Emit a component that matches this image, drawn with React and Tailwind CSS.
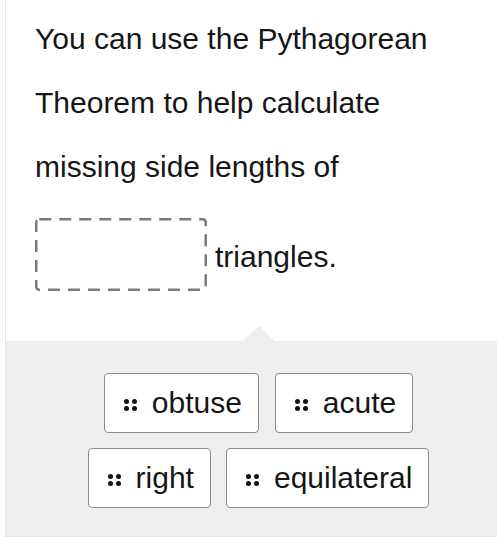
import React from "react";

function Dots() {
  return (
    <svg width="13" height="12" viewBox="0 0 13 12" className="shrink-0 mt-[3px]">
      <circle cx="2.5" cy="2.5" r="2.5" fill="#111" />
      <circle cx="10.5" cy="2.5" r="2.5" fill="#111" />
      <circle cx="2.5" cy="9.5" r="2.5" fill="#111" />
      <circle cx="10.5" cy="9.5" r="2.5" fill="#111" />
    </svg>
  );
}

function Chip({ label }) {
  return (
    <div className="h-[60px] flex items-center gap-[15px] pl-[19px] pr-[16px] bg-white border border-[#8c8c8c] rounded-[4px]">
      <Dots />
      <span className="text-[30px] leading-[34px] text-[#161616]">{label}</span>
    </div>
  );
}

export default function App() {
  return (
    <div
      className="w-[497px] h-[544px] overflow-hidden bg-white"
      style={{ fontFamily: '"Liberation Sans", Arial, Helvetica, sans-serif' }}
    >
      <div className="ml-[5px] w-[506px] h-[537px] flex flex-col border-l border-b border-[#e4e4e4]">
        <div className="pl-[29px] pt-[7px] pb-[50px] text-[30px] leading-[64px] text-[#161616]">
          <div>You can use the Pythagorean</div>
          <div>Theorem to help calculate</div>
          <div>missing side lengths of</div>
          <div className="flex items-start mt-[19px]">
            <div className="w-[172px] h-[73px] shrink-0">
              <svg width="172" height="73" viewBox="0 0 172 73" className="block">
                <rect
                  x="1.25"
                  y="1.25"
                  width="169.5"
                  height="70.5"
                  rx="3"
                  fill="none"
                  stroke="#7a7a7a"
                  strokeWidth="2.5"
                  strokeDasharray="12 8"
                />
              </svg>
            </div>
            <span className="ml-[8px] mt-[22px] leading-[34px]">triangles.</span>
          </div>
        </div>
        <div className="relative flex-1 bg-[#eeeeee] pt-[32px] flex flex-col items-center gap-[15px]">
          <div className="absolute left-1/2 top-[-11px] -translate-x-1/2 w-[22px] h-[22px] rotate-45 bg-[#eeeeee]" />
          <div className="relative flex gap-[16px]">
            <Chip label="obtuse" />
            <Chip label="acute" />
          </div>
          <div className="relative flex gap-[15px]">
            <Chip label="right" />
            <Chip label="equilateral" />
          </div>
        </div>
      </div>
    </div>
  );
}
